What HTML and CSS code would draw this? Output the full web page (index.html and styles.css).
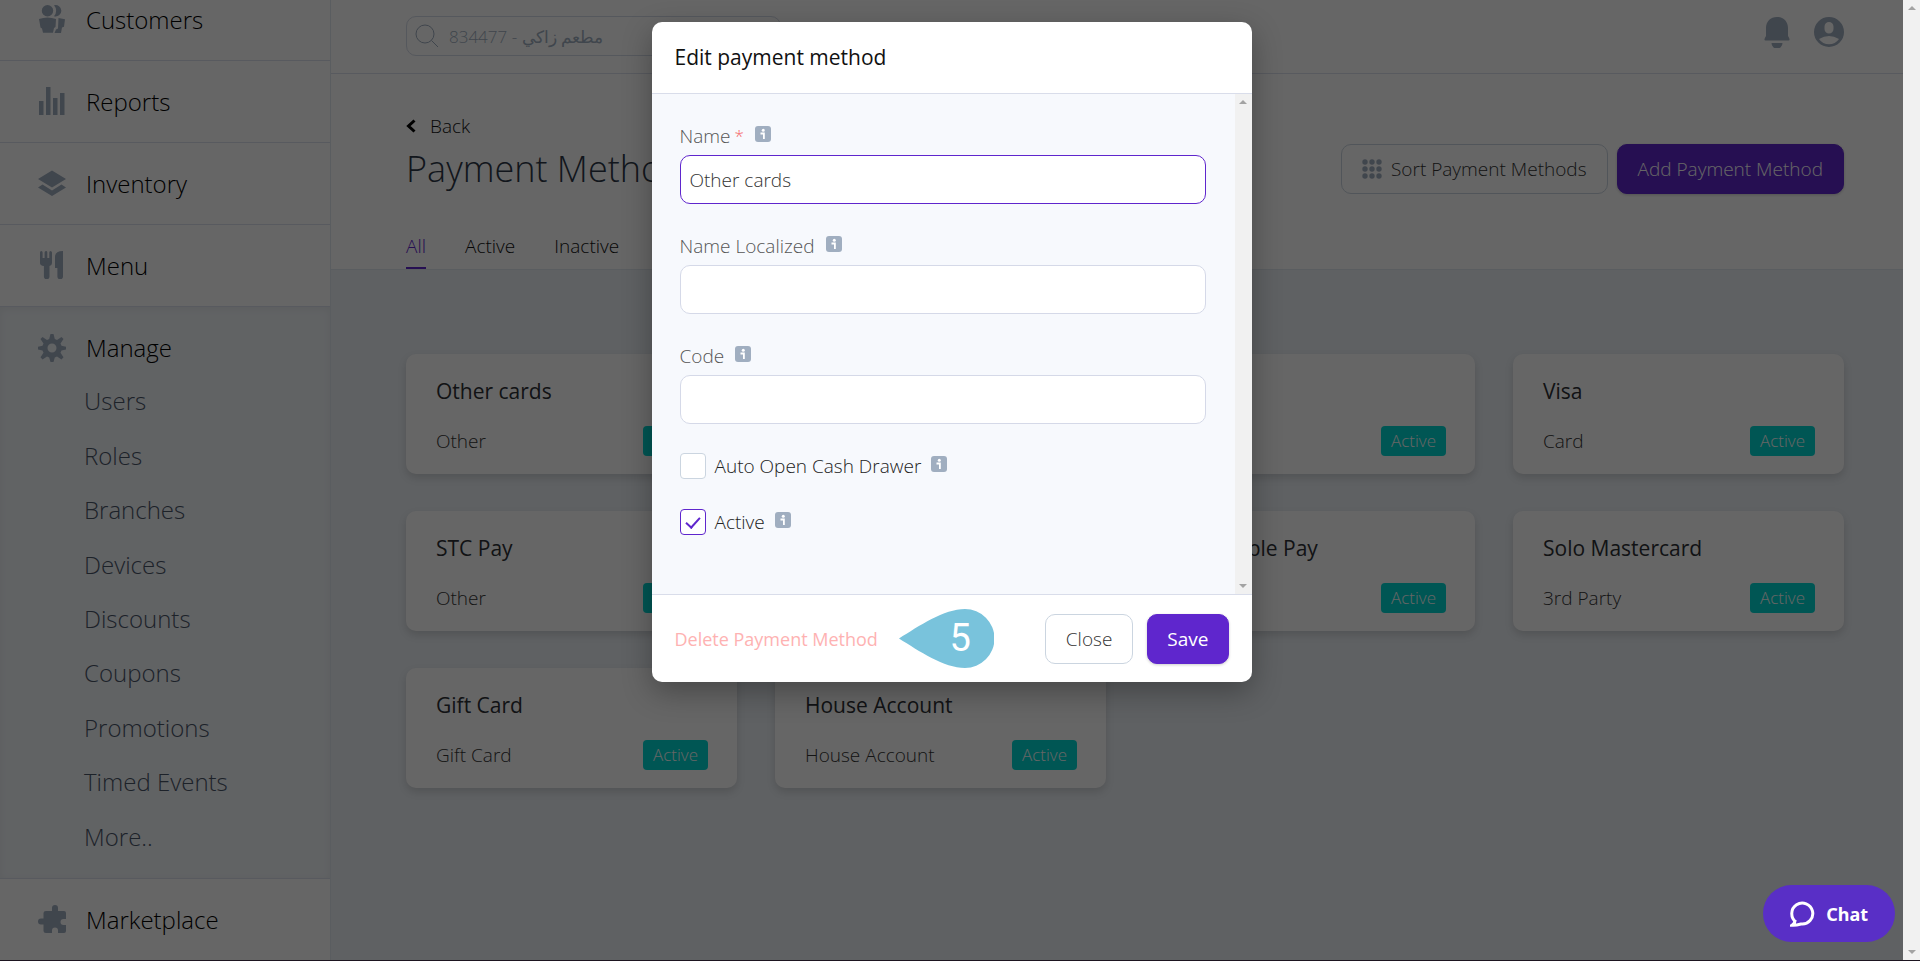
FILE: index.html
```
<!DOCTYPE html>
<html lang="en">
<head>
    <meta charset="UTF-8">
    <meta name="viewport" content="width=device-width, initial-scale=1.0">
    <title>Payment Methods</title>
    <link rel="stylesheet" href="styles.css">
</head>
<body>
    <svg class="sprite" aria-hidden="true">
        <symbol id="info" viewBox="0 0 16 16">
            <rect width="16" height="16" rx="3" fill="#a0aec0"/>
            <circle cx="8.300" cy="4.200" r="1.500" fill="#fff"/>
            <path d="M5.500 7.500h3.400v5.500" fill="none" stroke="#fff" stroke-width="1.800"/>
        </symbol>
    </svg>

    <div class="page">
        <aside class="sidebar">
            <nav>
                <a class="nav-item" href="#">
                    <svg viewBox="0 0 28 28"><circle cx="9.500" cy="5.700" r="5.700"/><path d="M16 0.300a5.700 5.700 0 1 1 0 10.900a8 8 0 0 0 0-10.900zM1 14q8.500-3 17 0l-.5 8-1.500 1-1 4.800H5L4 23.500l-1.500-1zM20.500 13l6.500 1.300-1 7.500-2 .7-1 5.500h-6.500l1.500-3.500 2-1z"/></svg>
                    Customers
                </a>
                <a class="nav-item" href="#">
                    <svg viewBox="0 0 28 28"><path d="M1 14h4.500v14H1zM8 0h4.500v28H8zM15 11h4.500v17H15zM22 6h4.500v22H22z"/></svg>
                    Reports
                </a>
                <a class="nav-item" href="#">
                    <svg viewBox="0 0 28 28"><path d="M14 1.500L28 10 14 18.500 0 10zM4.500 15.500L14 21.500l9.500-6 4.500 3L14 27 0 18.500z"/></svg>
                    Inventory
                </a>
                <a class="nav-item" href="#">
                    <svg viewBox="0 0 28 28"><path d="M2 1.500q0-1.500 1.300-1.500T4.600 1.500V7h2V1.500Q6.600 0 8 0t1.300 1.500V7h2V1.500Q11.300 0 12.500 0T14 1.500V12q0 2.500-2.500 3V25.500a2.800 2.800 0 0 1-5.600 0V15Q2 14.500 2 12zM25 0v25.500a2.800 2.800 0 0 1-5.600 0V17H17V6q0-6 8-6z"/></svg>
                    Menu
                </a>
                <div class="nav-group">
                    <a class="nav-item" href="#">
                        <svg viewBox="0 0 28 28"><path fill-rule="evenodd" d="M12.500 0h3l1.300 5 2.200 1 4.500-3 2 2-3 4.500 1 2.200 4.500 1.100v2.600l-4.500 1.200-1 2.200 3 4.400-2 2.200-4.500-3-2.200 1L15.500 28h-3l-1.300-4.600-2.200-1-4.500 3-2-2.200 3-4.400-1-2.200L0 15.400v-2.600l4.500-1.100 1-2.200-3-4.500 2-2 4.500 3 2.200-1zM14 9.500a4.500 4.500 0 1 0 0 9 4.500 4.500 0 0 0 0-9z"/></svg>
                        Manage
                    </a>
                    <ul class="submenu">
                        <li><a href="#">Users</a></li>
                        <li><a href="#">Roles</a></li>
                        <li><a href="#">Branches</a></li>
                        <li><a href="#">Devices</a></li>
                        <li><a href="#">Discounts</a></li>
                        <li><a href="#">Coupons</a></li>
                        <li><a href="#">Promotions</a></li>
                        <li><a href="#">Timed Events</a></li>
                        <li><a href="#">More..</a></li>
                    </ul>
                </div>
                <a class="nav-item" href="#">
                    <svg viewBox="0 0 28 28"><path d="M14 6V3a3 3 0 0 1 6 0v3h6q2 0 2 2v6h-2.500a3 3 0 0 0 0 6H28v6q0 2-2 2h-6v-2.500a3 3 0 0 0-6 0V28H8q-2.500 0-2.500-2v-6.500H3a3 3 0 0 1 0-6h2.500V8Q5.500 6 8 6z"/></svg>
                    Marketplace
                </a>
            </nav>
        </aside>

        <main class="main">
            <header class="topbar">
                <label class="search">
                    <svg viewBox="0 0 24 24"><circle cx="10" cy="10" r="9"/><path d="M16.500 16.500L23 23"/></svg>
                    <input type="text" placeholder="834477 - مطعم زاكي" aria-label="Search">
                </label>
                <div class="top-icons">
                    <a href="#" aria-label="Notifications"><svg viewBox="0 0 30 32"><path d="M15 1C8.500 1 4 5.500 4 12v8q-1 1.500-1.500 3-.3 1.500 1 1.500h23q1.300 0 1-1.500-.5-1.500-1.500-3v-8C26 5.500 21.500 1 15 1zM9.500 27h11a5.500 5.500 0 0 1-11 0z"/></svg></a>
                    <a href="#" aria-label="Account"><svg viewBox="0 0 30 30"><path fill-rule="evenodd" d="M15 0a15 15 0 1 0 0 30 15 15 0 0 0 0-30zM15 5a4.500 4.500 0 0 1 4.500 4.500v2.500a4.500 4.500 0 0 1-9 0V9.500A4.500 4.500 0 0 1 15 5zM5 22q10-6 20 0a12 12 0 0 1-20 0z"/></svg></a>
                </div>
            </header>

            <section class="heading">
                <a class="back" href="#"><svg viewBox="0 0 10 14"><path d="M8.500 1.500L2.500 7l6 5.500"/></svg>Back</a>
                <div class="title-row">
                    <h1>Payment Methods</h1>
                    <div class="actions">
                        <button class="btn" type="button">
                            <svg viewBox="0 0 20 20"><circle cx="3" cy="3" r="2.700"/><circle cx="10" cy="3" r="2.700"/><circle cx="17" cy="3" r="2.700"/><circle cx="3" cy="10" r="2.700"/><circle cx="10" cy="10" r="2.700"/><circle cx="17" cy="10" r="2.700"/><circle cx="3" cy="17" r="2.700"/><circle cx="10" cy="17" r="2.700"/><circle cx="17" cy="17" r="2.700"/></svg>
                            Sort Payment Methods
                        </button>
                        <button class="btn btn-primary" type="button">Add Payment Method</button>
                    </div>
                </div>
                <div class="tabs">
                    <a class="active" href="#">All</a>
                    <a href="#">Active</a>
                    <a href="#">Inactive</a>
                </div>
            </section>

            <section class="cards">
                <article class="card"><h2>Other cards</h2><p>Other <span class="badge">Active</span></p></article>
                <article class="card"><h2>Cash</h2><p>Cash <span class="badge">Active</span></p></article>
                <article class="card"><h2>Mada</h2><p>Card <span class="badge">Active</span></p></article>
                <article class="card"><h2>Visa</h2><p>Card <span class="badge">Active</span></p></article>
                <article class="card"><h2>STC Pay</h2><p>Other <span class="badge">Active</span></p></article>
                <article class="card"><h2>Mastercard</h2><p>Card <span class="badge">Active</span></p></article>
                <article class="card"><h2>Solo Apple Pay</h2><p>Other <span class="badge">Active</span></p></article>
                <article class="card"><h2>Solo Mastercard</h2><p>3rd Party <span class="badge">Active</span></p></article>
                <article class="card"><h2>Gift Card</h2><p>Gift Card <span class="badge">Active</span></p></article>
                <article class="card"><h2>House Account</h2><p>House Account <span class="badge">Active</span></p></article>
            </section>
        </main>

        <div class="overlay">
            <form class="modal" role="dialog" aria-labelledby="modal-title">
                <h2 class="modal-header" id="modal-title">Edit payment method</h2>
                <div class="modal-body">
                    <div class="fields">
                        <div class="field">
                            <label for="name">Name <span class="required">*</span> <svg class="info"><use href="#info"/></svg></label>
                            <input class="selected" type="text" id="name" value="Other cards">
                        </div>
                        <div class="field">
                            <label for="localized">Name Localized <svg class="info"><use href="#info"/></svg></label>
                            <input type="text" id="localized">
                        </div>
                        <div class="field">
                            <label for="code">Code <svg class="info"><use href="#info"/></svg></label>
                            <input type="text" id="code">
                        </div>
                        <label class="check"><input type="checkbox">Auto Open Cash Drawer <svg class="info"><use href="#info"/></svg></label>
                        <label class="check"><input type="checkbox" checked>Active <svg class="info"><use href="#info"/></svg></label>
                    </div>
                    <div class="scrollbar"><i class="up"></i><i class="down"></i></div>
                </div>
                <div class="modal-footer">
                    <a class="delete" href="#">Delete Payment Method</a>
                    <button class="btn" type="button">Close</button>
                    <button class="btn btn-primary" type="button">Save</button>
                    <div class="callout">
                        <svg viewBox="0 0 95 59"><path d="M0 29.500C20 17 45 0 66 0a29.500 29.500 0 0 1 0 59C45 59 20 42 0 29.500z"/></svg>
                        <span>5</span>
                    </div>
                </div>
            </form>
        </div>
    </div>

    <div class="scrollbar"><i class="up"></i><i class="down"></i></div>

    <button class="chat" type="button">
        <svg viewBox="0 0 26 26"><path d="M6 21A10.500 10.500 0 1 1 11 23Q6 24.500 2 24.300 5 22.500 4.800 19.500"/></svg>
        Chat
    </button>
</body>
</html>
```
FILE: styles.css
```
* {
    box-sizing: border-box;
}

body {
    margin: 0;
    display: flex;
    height: 100vh;
    overflow: hidden;
    border-bottom: 1px solid #1d1520;
    font-family: "Open Sans", "Noto Sans", sans-serif;
    font-size: 19px;
    font-weight: 300;
    color: #111;
}

a {
    color: inherit;
    text-decoration: none;
}

button,
input {
    font: inherit;
    color: inherit;
}

.sprite {
    position: absolute;
    width: 0;
    height: 0;
}

.page {
    position: relative;
    flex: 1;
    display: flex;
    overflow: hidden;
}

/* Sidebar */
.sidebar {
    width: 331px;
    flex: none;
    overflow: hidden;
    border-right: 1px solid #e2e8f0;
    background: #fff;
}

.sidebar nav {
    margin-top: -21px;
}

.nav-item {
    display: flex;
    align-items: center;
    gap: 20px;
    height: 82px;
    padding: 0 0 1px 38px;
    border-bottom: 1px solid #dde1ee;
    font-size: 24px;
    color: #000;
}

.nav-item svg {
    width: 28px;
    height: 28px;
    fill: #a0aec0;
}

.nav-group {
    padding: 14px 0 13px;
    border-bottom: 1px solid #dde1ee;
    background: #f3f7fb;
    box-shadow: inset 0 2px 8px rgba(0, 0, 0, 0.06);
}

.nav-group .nav-item {
    height: 54px;
    border-bottom: 0;
}

.submenu {
    display: grid;
    height: 490px;
    margin: 0;
    padding: 0 0 0 84px;
    list-style: none;
    font-size: 24px;
    color: #4a5568;
}

.submenu li {
    display: flex;
    align-items: center;
    padding-bottom: 3px;
}

/* Main column */
.main {
    flex: 1;
    min-width: 0;
    background: #edf2f7;
}

.topbar {
    display: flex;
    align-items: flex-start;
    justify-content: space-between;
    height: 74px;
    padding: 16px 59px 0 75px;
    border-bottom: 1px solid #dde1ee;
    background: #fff;
}

.search {
    display: flex;
    align-items: center;
    gap: 8px;
    width: 375px;
    height: 40px;
    padding: 0 8px;
    border: 1px solid #d5dbe8;
    border-radius: 10px;
    font-size: 17px;
}

.search svg {
    width: 24px;
    height: 24px;
    fill: none;
    stroke: #a0aec0;
}

.search input {
    flex: 1;
    min-width: 0;
    border: 0;
    outline: 0;
    background: none;
}

.search input::placeholder {
    color: #a0aec0;
    opacity: 1;
}

.top-icons {
    display: flex;
    align-items: center;
    gap: 22px;
}

.top-icons a {
    display: flex;
}

.top-icons svg {
    width: 30px;
    height: 32px;
    fill: #a0aec0;
}

.heading {
    height: 196px;
    padding: 40px 59px 0 75px;
    border-bottom: 1px solid #e2e8f0;
    background: #fff;
}

.back {
    display: flex;
    align-items: center;
    gap: 14px;
    height: 24px;
}

.back svg {
    width: 10px;
    height: 14px;
    fill: none;
    stroke: #000;
    stroke-width: 3;
}

.title-row {
    display: flex;
    align-items: center;
    justify-content: space-between;
    height: 62px;
}

h1 {
    margin: 0;
    font-size: 36px;
    font-weight: 300;
    line-height: 50px;
    color: #2d3748;
}

.actions {
    display: flex;
    gap: 9px;
}

.btn {
    display: flex;
    align-items: center;
    gap: 9px;
    height: 50px;
    padding: 0 20px;
    border: 1px solid #cbd5e0;
    border-radius: 10px;
    background: #fff;
    color: #333;
}

.btn svg {
    width: 20px;
    height: 22px;
    fill: #a0aec0;
}

.btn-primary {
    border-color: #5f26cd;
    background: #5f26cd;
    box-shadow: 0 1px 3px rgba(0, 0, 0, 0.2);
    color: #fff;
}

.modal .btn-primary {
    padding: 0 19px;
    font-weight: 400;
}

.tabs {
    display: flex;
    gap: 39px;
    margin-top: 29px;
}

.tabs a {
    height: 40px;
    line-height: 34px;
}

.tabs .active {
    border-bottom: 2px solid #5f26cd;
    color: #5f26cd;
}

.cards {
    display: grid;
    grid-template-columns: repeat(4, 1fr);
    gap: 37px 38px;
    padding: 84px 59px 0 75px;
}

.card {
    display: flex;
    flex-direction: column;
    justify-content: space-between;
    height: 120px;
    padding: 22px 29px 18px 30px;
    border-radius: 10px;
    background: #fff;
    box-shadow: 0 4px 8px rgba(0, 0, 0, 0.14);
}

.card h2 {
    margin: 0;
    font-size: 21px;
    font-weight: 500;
    line-height: 30px;
    color: #2d3035;
}

.card p {
    display: flex;
    align-items: center;
    justify-content: space-between;
    margin: 0;
    line-height: 30px;
    color: #333;
}

.badge {
    padding: 0 10px;
    border-radius: 4px;
    background: #00d7d2;
    font-size: 17px;
    color: #fff;
}

/* Dialog */
.overlay {
    position: absolute;
    inset: 0;
    display: flex;
    align-items: flex-start;
    justify-content: center;
    padding-top: 22px;
    background: rgba(0, 0, 0, 0.6);
}

.modal {
    width: 600px;
    border-radius: 10px;
    background: #fff;
    box-shadow: 0 10px 30px rgba(0, 0, 0, 0.3);
}

.modal-header {
    margin: 0;
    padding: 0 23px;
    border-bottom: 1px solid #d9ddea;
    font-size: 21px;
    font-weight: 500;
    line-height: 71px;
}

.modal-body {
    display: flex;
    height: 500px;
    background: #f7f9fd;
}

.fields {
    flex: 1;
    padding: 29px 29px 0 28px;
}

.field {
    margin-bottom: 29px;
}

.field label {
    display: flex;
    gap: 4px;
    height: 32px;
    line-height: 26px;
    color: #555;
}

.info {
    width: 16px;
    height: 16px;
    margin: 3px 0 0 7px;
}

.required {
    font-size: 17px;
    color: #f56565;
}

.field input {
    display: block;
    width: 100%;
    height: 49px;
    padding: 0 9px;
    border: 1px solid #d5d9e8;
    border-radius: 10px;
    outline: 0;
    background: #fff;
    color: #333;
}

.field .selected {
    border-color: #5f26cd;
}

.check {
    display: flex;
    height: 26px;
    margin-bottom: 30px;
    line-height: 26px;
    color: #222;
}

.check input {
    appearance: none;
    width: 26px;
    height: 26px;
    margin: 0 9px 0 0;
    border: 1px solid #cbd5e0;
    border-radius: 4px;
    background: #fff;
}

.check input:checked {
    display: flex;
    justify-content: center;
    border-color: #5f26cd;
}

.check input:checked::after {
    content: "";
    width: 6px;
    height: 12px;
    margin-top: 4px;
    border: solid #5f26cd;
    border-width: 0 2px 2px 0;
    transform: rotate(42deg);
}

.check .info {
    margin-left: 10px;
}

.modal-footer {
    position: relative;
    display: flex;
    align-items: center;
    gap: 14px;
    height: 88px;
    padding: 0 23px;
    border-top: 1px solid #d9ddea;
}

.delete {
    margin-right: auto;
    font-size: 18px;
    font-weight: 400;
    color: #feb2b2;
}

.callout {
    position: absolute;
    left: 247px;
    top: 14px;
    width: 95px;
    height: 59px;
}

.callout svg {
    display: block;
    fill: #79c3dc;
}

.callout span {
    position: absolute;
    inset: 0 0 0 51px;
    font-family: Roboto, sans-serif;
    font-size: 38px;
    font-weight: 400;
    line-height: 59px;
    color: #fff;
}

/* Scrollbars */
.scrollbar {
    display: flex;
    flex-direction: column;
    justify-content: space-between;
    align-items: center;
    width: 17px;
    padding: 6px 0;
    background: #f1f1f1;
}

.scrollbar i {
    border: 4px solid transparent;
}

.scrollbar .up {
    border-top-width: 0;
    border-bottom-color: #a3a3a3;
}

.scrollbar .down {
    border-bottom-width: 0;
    border-top-color: #a3a3a3;
}

.chat {
    position: fixed;
    right: 25px;
    bottom: 19px;
    display: flex;
    align-items: center;
    gap: 10px;
    height: 57px;
    padding: 0 27px;
    border: 0;
    border-radius: 29px;
    background: #592fc6;
    font-family: "Noto Sans", sans-serif;
    font-size: 18px;
    font-weight: 700;
    color: #fff;
}

.chat svg {
    width: 26px;
    height: 26px;
    fill: none;
    stroke: #fff;
    stroke-width: 3;
}
```
